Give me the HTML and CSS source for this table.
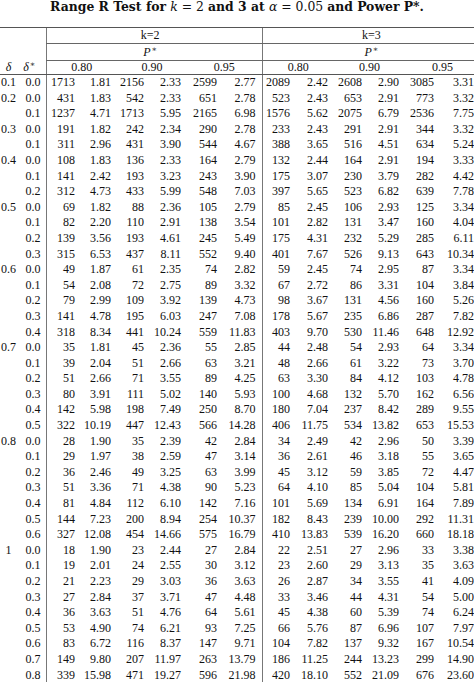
FILE: index.html
```html
<!DOCTYPE html>
<html>
<head>
<meta charset="utf-8">
<link rel="stylesheet" href="styles.css">
</head>
<body>
<h1 class="title">Range R Test for <i>k</i><span class="m"> = 2 </span>and 3 at <i>α</i><span class="m"> = 0.05 </span>and Power P*.</h1>
<table class="tbl">
<colgroup>
<col class="w-d"><col class="w-ds">
<col class="w-1"><col class="w-2"><col class="w-3"><col class="w-4"><col class="w-5"><col class="w-6">
<col class="w-7"><col class="w-8"><col class="w-9"><col class="w-10"><col class="w-11"><col class="w-12">
</colgroup>
<thead>
<tr class="h1"><th colspan="2" rowspan="2" class="blank"></th><th colspan="6" class="vl ul g2">k=2</th><th colspan="6" class="vl ul">k=3</th></tr>
<tr class="h2"><th colspan="6" class="vl ul g2"><i>P</i><sup>∗</sup></th><th colspan="6" class="vl ul"><i>P</i><sup>∗</sup></th></tr>
<tr class="h3"><th class="dc"><i>δ</i></th><th class="dsc"><i>δ</i><sup>∗</sup></th><th colspan="2" class="vl">0.80</th><th colspan="2">0.90</th><th colspan="2">0.95</th><th colspan="2" class="vl">0.80</th><th colspan="2">0.90</th><th colspan="2">0.95</th></tr>
</thead>
<tbody>
<tr><td class="dc">0.1</td><td class="dsc">0.0</td><td class="vl">1713</td><td>1.81</td><td>2156</td><td>2.33</td><td>2599</td><td>2.77</td><td class="vl">2089</td><td>2.42</td><td>2608</td><td>2.90</td><td>3085</td><td>3.31</td></tr>
<tr><td class="dc">0.2</td><td class="dsc">0.0</td><td class="vl">431</td><td>1.83</td><td>542</td><td>2.33</td><td>651</td><td>2.78</td><td class="vl">523</td><td>2.43</td><td>653</td><td>2.91</td><td>773</td><td>3.32</td></tr>
<tr><td class="dc"></td><td class="dsc">0.1</td><td class="vl">1237</td><td>4.71</td><td>1713</td><td>5.95</td><td>2165</td><td>6.98</td><td class="vl">1576</td><td>5.62</td><td>2075</td><td>6.79</td><td>2536</td><td>7.75</td></tr>
<tr><td class="dc">0.3</td><td class="dsc">0.0</td><td class="vl">191</td><td>1.82</td><td>242</td><td>2.34</td><td>290</td><td>2.78</td><td class="vl">233</td><td>2.43</td><td>291</td><td>2.91</td><td>344</td><td>3.32</td></tr>
<tr><td class="dc"></td><td class="dsc">0.1</td><td class="vl">311</td><td>2.96</td><td>431</td><td>3.90</td><td>544</td><td>4.67</td><td class="vl">388</td><td>3.65</td><td>516</td><td>4.51</td><td>634</td><td>5.24</td></tr>
<tr><td class="dc">0.4</td><td class="dsc">0.0</td><td class="vl">108</td><td>1.83</td><td>136</td><td>2.33</td><td>164</td><td>2.79</td><td class="vl">132</td><td>2.44</td><td>164</td><td>2.91</td><td>194</td><td>3.33</td></tr>
<tr><td class="dc"></td><td class="dsc">0.1</td><td class="vl">141</td><td>2.42</td><td>193</td><td>3.23</td><td>243</td><td>3.90</td><td class="vl">175</td><td>3.07</td><td>230</td><td>3.79</td><td>282</td><td>4.42</td></tr>
<tr><td class="dc"></td><td class="dsc">0.2</td><td class="vl">312</td><td>4.73</td><td>433</td><td>5.99</td><td>548</td><td>7.03</td><td class="vl">397</td><td>5.65</td><td>523</td><td>6.82</td><td>639</td><td>7.78</td></tr>
<tr><td class="dc">0.5</td><td class="dsc">0.0</td><td class="vl">69</td><td>1.82</td><td>88</td><td>2.36</td><td>105</td><td>2.79</td><td class="vl">85</td><td>2.45</td><td>106</td><td>2.93</td><td>125</td><td>3.34</td></tr>
<tr><td class="dc"></td><td class="dsc">0.1</td><td class="vl">82</td><td>2.20</td><td>110</td><td>2.91</td><td>138</td><td>3.54</td><td class="vl">101</td><td>2.82</td><td>131</td><td>3.47</td><td>160</td><td>4.04</td></tr>
<tr><td class="dc"></td><td class="dsc">0.2</td><td class="vl">139</td><td>3.56</td><td>193</td><td>4.61</td><td>245</td><td>5.49</td><td class="vl">175</td><td>4.31</td><td>232</td><td>5.29</td><td>285</td><td>6.11</td></tr>
<tr><td class="dc"></td><td class="dsc">0.3</td><td class="vl">315</td><td>6.53</td><td>437</td><td>8.11</td><td>552</td><td>9.40</td><td class="vl">401</td><td>7.67</td><td>526</td><td>9.13</td><td>643</td><td>10.34</td></tr>
<tr><td class="dc">0.6</td><td class="dsc">0.0</td><td class="vl">49</td><td>1.87</td><td>61</td><td>2.35</td><td>74</td><td>2.82</td><td class="vl">59</td><td>2.45</td><td>74</td><td>2.95</td><td>87</td><td>3.34</td></tr>
<tr><td class="dc"></td><td class="dsc">0.1</td><td class="vl">54</td><td>2.08</td><td>72</td><td>2.75</td><td>89</td><td>3.32</td><td class="vl">67</td><td>2.72</td><td>86</td><td>3.31</td><td>104</td><td>3.84</td></tr>
<tr><td class="dc"></td><td class="dsc">0.2</td><td class="vl">79</td><td>2.99</td><td>109</td><td>3.92</td><td>139</td><td>4.73</td><td class="vl">98</td><td>3.67</td><td>131</td><td>4.56</td><td>160</td><td>5.26</td></tr>
<tr><td class="dc"></td><td class="dsc">0.3</td><td class="vl">141</td><td>4.78</td><td>195</td><td>6.03</td><td>247</td><td>7.08</td><td class="vl">178</td><td>5.67</td><td>235</td><td>6.86</td><td>287</td><td>7.82</td></tr>
<tr><td class="dc"></td><td class="dsc">0.4</td><td class="vl">318</td><td>8.34</td><td>441</td><td>10.24</td><td>559</td><td>11.83</td><td class="vl">403</td><td>9.70</td><td>530</td><td>11.46</td><td>648</td><td>12.92</td></tr>
<tr><td class="dc">0.7</td><td class="dsc">0.0</td><td class="vl">35</td><td>1.81</td><td>45</td><td>2.36</td><td>55</td><td>2.85</td><td class="vl">44</td><td>2.48</td><td>54</td><td>2.93</td><td>64</td><td>3.34</td></tr>
<tr><td class="dc"></td><td class="dsc">0.1</td><td class="vl">39</td><td>2.04</td><td>51</td><td>2.66</td><td>63</td><td>3.21</td><td class="vl">48</td><td>2.66</td><td>61</td><td>3.22</td><td>73</td><td>3.70</td></tr>
<tr><td class="dc"></td><td class="dsc">0.2</td><td class="vl">51</td><td>2.66</td><td>71</td><td>3.55</td><td>89</td><td>4.25</td><td class="vl">63</td><td>3.30</td><td>84</td><td>4.12</td><td>103</td><td>4.78</td></tr>
<tr><td class="dc"></td><td class="dsc">0.3</td><td class="vl">80</td><td>3.91</td><td>111</td><td>5.02</td><td>140</td><td>5.93</td><td class="vl">100</td><td>4.68</td><td>132</td><td>5.70</td><td>162</td><td>6.56</td></tr>
<tr><td class="dc"></td><td class="dsc">0.4</td><td class="vl">142</td><td>5.98</td><td>198</td><td>7.49</td><td>250</td><td>8.70</td><td class="vl">180</td><td>7.04</td><td>237</td><td>8.42</td><td>289</td><td>9.55</td></tr>
<tr><td class="dc"></td><td class="dsc">0.5</td><td class="vl">322</td><td>10.19</td><td>447</td><td>12.43</td><td>566</td><td>14.28</td><td class="vl">406</td><td>11.75</td><td>534</td><td>13.82</td><td>653</td><td>15.53</td></tr>
<tr><td class="dc">0.8</td><td class="dsc">0.0</td><td class="vl">28</td><td>1.90</td><td>35</td><td>2.39</td><td>42</td><td>2.84</td><td class="vl">34</td><td>2.49</td><td>42</td><td>2.96</td><td>50</td><td>3.39</td></tr>
<tr><td class="dc"></td><td class="dsc">0.1</td><td class="vl">29</td><td>1.97</td><td>38</td><td>2.59</td><td>47</td><td>3.14</td><td class="vl">36</td><td>2.61</td><td>46</td><td>3.18</td><td>55</td><td>3.65</td></tr>
<tr><td class="dc"></td><td class="dsc">0.2</td><td class="vl">36</td><td>2.46</td><td>49</td><td>3.25</td><td>63</td><td>3.99</td><td class="vl">45</td><td>3.12</td><td>59</td><td>3.85</td><td>72</td><td>4.47</td></tr>
<tr><td class="dc"></td><td class="dsc">0.3</td><td class="vl">51</td><td>3.36</td><td>71</td><td>4.38</td><td>90</td><td>5.23</td><td class="vl">64</td><td>4.10</td><td>85</td><td>5.04</td><td>104</td><td>5.81</td></tr>
<tr><td class="dc"></td><td class="dsc">0.4</td><td class="vl">81</td><td>4.84</td><td>112</td><td>6.10</td><td>142</td><td>7.16</td><td class="vl">101</td><td>5.69</td><td>134</td><td>6.91</td><td>164</td><td>7.89</td></tr>
<tr><td class="dc"></td><td class="dsc">0.5</td><td class="vl">144</td><td>7.23</td><td>200</td><td>8.94</td><td>254</td><td>10.37</td><td class="vl">182</td><td>8.43</td><td>239</td><td>10.00</td><td>292</td><td>11.31</td></tr>
<tr><td class="dc"></td><td class="dsc">0.6</td><td class="vl">327</td><td>12.08</td><td>454</td><td>14.66</td><td>575</td><td>16.79</td><td class="vl">410</td><td>13.83</td><td>539</td><td>16.20</td><td>660</td><td>18.18</td></tr>
<tr><td class="dc">1</td><td class="dsc">0.0</td><td class="vl">18</td><td>1.90</td><td>23</td><td>2.44</td><td>27</td><td>2.84</td><td class="vl">22</td><td>2.51</td><td>27</td><td>2.96</td><td>33</td><td>3.38</td></tr>
<tr><td class="dc"></td><td class="dsc">0.1</td><td class="vl">19</td><td>2.01</td><td>24</td><td>2.55</td><td>30</td><td>3.12</td><td class="vl">23</td><td>2.60</td><td>29</td><td>3.13</td><td>35</td><td>3.63</td></tr>
<tr><td class="dc"></td><td class="dsc">0.2</td><td class="vl">21</td><td>2.23</td><td>29</td><td>3.03</td><td>36</td><td>3.63</td><td class="vl">26</td><td>2.87</td><td>34</td><td>3.55</td><td>41</td><td>4.09</td></tr>
<tr><td class="dc"></td><td class="dsc">0.3</td><td class="vl">27</td><td>2.84</td><td>37</td><td>3.71</td><td>47</td><td>4.48</td><td class="vl">33</td><td>3.46</td><td>44</td><td>4.31</td><td>54</td><td>5.00</td></tr>
<tr><td class="dc"></td><td class="dsc">0.4</td><td class="vl">36</td><td>3.63</td><td>51</td><td>4.76</td><td>64</td><td>5.61</td><td class="vl">45</td><td>4.38</td><td>60</td><td>5.39</td><td>74</td><td>6.24</td></tr>
<tr><td class="dc"></td><td class="dsc">0.5</td><td class="vl">53</td><td>4.90</td><td>74</td><td>6.21</td><td>93</td><td>7.25</td><td class="vl">66</td><td>5.76</td><td>87</td><td>6.96</td><td>107</td><td>7.97</td></tr>
<tr><td class="dc"></td><td class="dsc">0.6</td><td class="vl">83</td><td>6.72</td><td>116</td><td>8.37</td><td>147</td><td>9.71</td><td class="vl">104</td><td>7.82</td><td>137</td><td>9.32</td><td>167</td><td>10.54</td></tr>
<tr><td class="dc"></td><td class="dsc">0.7</td><td class="vl">149</td><td>9.80</td><td>207</td><td>11.97</td><td>263</td><td>13.79</td><td class="vl">186</td><td>11.25</td><td>244</td><td>13.23</td><td>299</td><td>14.90</td></tr>
<tr><td class="dc"></td><td class="dsc">0.8</td><td class="vl">339</td><td>15.98</td><td>471</td><td>19.27</td><td>596</td><td>21.98</td><td class="vl">420</td><td>18.10</td><td>552</td><td>21.09</td><td>676</td><td>23.60</td></tr>
</tbody>
</table>
</body>
</html>
```
FILE: styles.css
```css
html, body {
  margin: 0;
  padding: 0;
  background: #ffffff;
  overflow: hidden;
}
body {
  width: 474px;
  height: 682px;
  font-family: "Liberation Serif", "DejaVu Serif", serif;
  color: #111111;
}
.title {
  margin: 0;
  height: 27px;
  font-family: "DejaVu Serif", "Liberation Serif", serif;
  font-size: 12.4px;
  line-height: 13px;
  font-weight: bold;
  text-align: center;
  white-space: nowrap;
  color: #111111;
}
.title i,
.title .m {
  font-weight: normal;
}
.tbl {
  border-collapse: collapse;
  table-layout: fixed;
  width: 480px;
  font-family: "Liberation Serif", "DejaVu Serif", serif;
  font-size: 12px;
}
.w-d { width: 17px; }
.w-ds { width: 29px; }
.w-1 { width: 35px; }
.w-2 { width: 36px; }
.w-3 { width: 33px; }
.w-4 { width: 37px; }
.w-5 { width: 36px; }
.w-6 { width: 39px; }
.w-7 { width: 34px; }
.w-8 { width: 38px; }
.w-9 { width: 34px; }
.w-10 { width: 37px; }
.w-11 { width: 35px; }
.w-12 { width: 40px; }
.tbl th {
  font-weight: normal;
  text-align: center;
  padding: 0;
  white-space: nowrap;
}
.tbl thead tr.h1 th {
  border-top: 1px solid #555555;
  height: 15px;
  line-height: 15px;
}
.tbl thead tr.h2 th {
  height: 16px;
  line-height: 16px;
}
.tbl thead tr.h3 th {
  height: 13px;
  line-height: 13px;
  border-bottom: 1px solid #555555;
}
.tbl th.ul {
  border-bottom: 1px solid #666666;
}
.tbl th.g2 {
  padding-right: 8px;
}
.tbl sup {
  font-size: 8px;
  line-height: 0;
  vertical-align: 4px;
  margin-left: 1px;
}
.tbl td {
  height: 15.6px;
  line-height: 15.6px;
  padding: 0 6px 0 0;
  text-align: right;
  white-space: nowrap;
}
.tbl .dc {
  text-align: center;
  padding: 0;
}
.tbl .dsc {
  text-align: right;
  padding: 0 5px 0 0;
}
.tbl th.dsc {
  text-align: center;
  padding: 0 4px 0 0;
}
.tbl .vl {
  border-left: 1px solid #777777;
}
```
